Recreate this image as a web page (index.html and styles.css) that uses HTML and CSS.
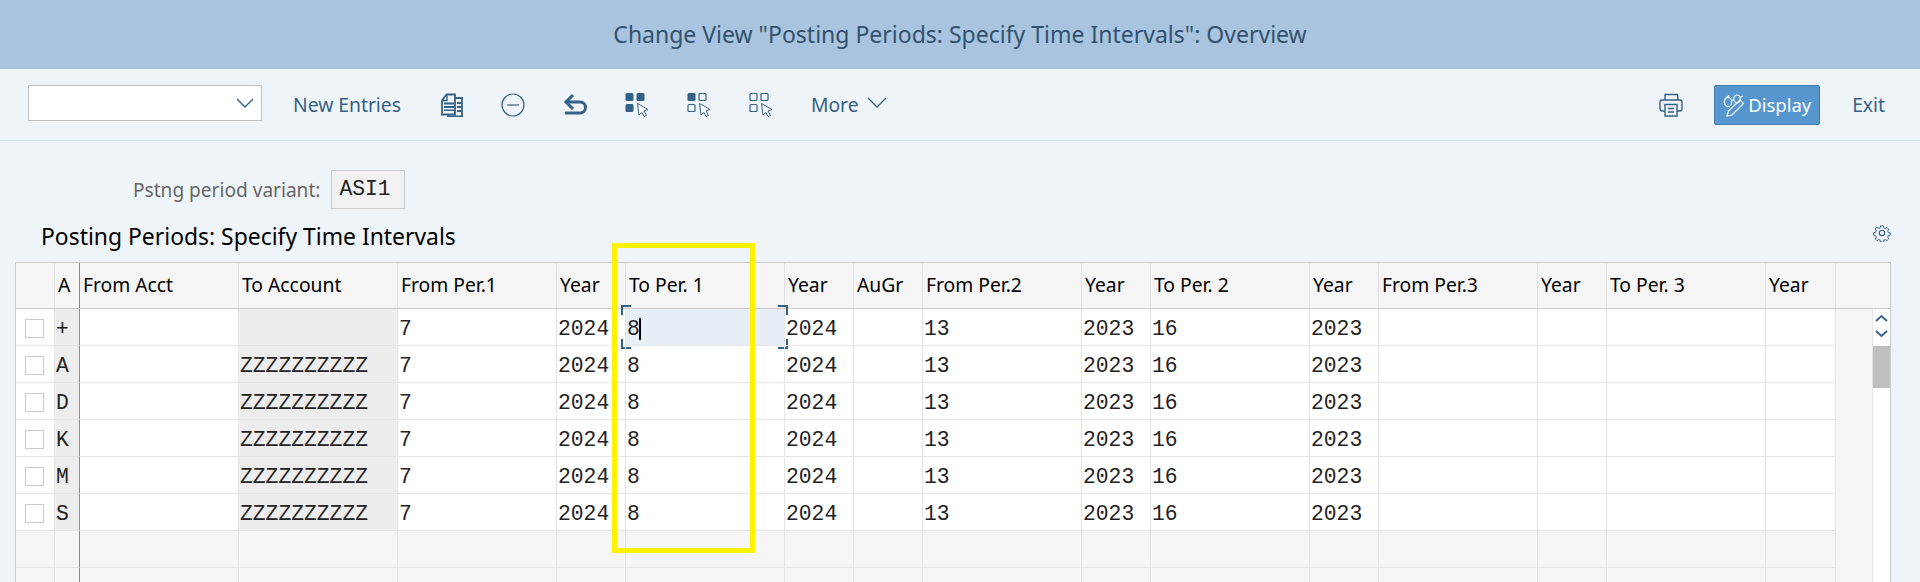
FILE: index.html
```html
<!DOCTYPE html>
<html lang="en">
<head>
<meta charset="utf-8">
<title>Change View</title>
<link rel="stylesheet" href="styles.css">
</head>
<body>
<header class="title-bar">Change View "Posting Periods: Specify Time Intervals": Overview</header>
<nav class="toolbar">
  <div class="select"><svg class="chev" width="18" height="10" viewBox="0 0 18 10"><path d="M1 1l8 8 8-8" fill="none" stroke="#346187" stroke-width="1.4"/></svg></div>
  <span class="tool-text first">New Entries</span>
  <svg class="icon" viewBox="0 0 24 24"><path d="M3 7.5L7.5 1.5H16V21.5H3Z" fill="none" stroke="#346187" stroke-width="1.8"/><path d="M3 7.5H8V2" fill="none" stroke="#346187" stroke-width="1.4"/><path d="M5 9.5h10v2H5zM5 13h10v2H5zM5 16.5h10v1.6H5z" fill="#346187"/><path d="M16.5 5H23V23.5H9V21.8" fill="none" stroke="#346187" stroke-width="1.8"/><path d="M18 9h4v2h-4zM18 13h4v2h-4zM18 17h4v2h-4z" fill="#346187"/></svg>
  <svg class="icon" viewBox="0 0 24 24"><circle cx="12" cy="12" r="11" fill="none" stroke="#346187" stroke-width="1.2"/><path d="M6 12h12" stroke="#346187" stroke-width="1.2"/></svg>
  <svg class="icon" viewBox="0 0 24 24"><path d="M10 2L3 9l7 7" fill="none" stroke="#346187" stroke-width="3"/><path d="M3.500 9H17a5.400 5.400 0 0 1 0 11H2" fill="none" stroke="#346187" stroke-width="3"/></svg>
  <svg class="icon" viewBox="0 0 24 24"><g fill="#346187"><rect x="0.5" y="0" width="8" height="8" rx="1.5"/><rect x="11.5" y="0" width="8" height="8" rx="1.5"/><rect x="0.5" y="11" width="8" height="8" rx="1.5"/></g><path class="cursor" d="M12.5 10.500L23 16.500 19 18 21.500 22.500 19 23.500 17 19.500 14 22Z"/></svg>
  <svg class="icon" viewBox="0 0 24 24"><rect x="0.5" y="0" width="8" height="8" rx="1.5" fill="#346187"/><g class="hollow"><rect x="12" y="0.500" width="7" height="7" rx="1"/><rect x="1" y="11.500" width="7" height="7" rx="1"/></g><path class="cursor" d="M12.5 10.500L23 16.500 19 18 21.500 22.500 19 23.500 17 19.500 14 22Z"/></svg>
  <svg class="icon" viewBox="0 0 24 24"><g class="hollow"><rect x="1" y="0.500" width="7" height="7" rx="1"/><rect x="12" y="0.500" width="7" height="7" rx="1"/><rect x="1" y="11.500" width="7" height="7" rx="1"/></g><path class="cursor" d="M12.5 10.500L23 16.500 19 18 21.500 22.500 19 23.500 17 19.500 14 22Z"/></svg>
  <span class="tool-text">More<svg class="more-chev" width="20" height="11" viewBox="0 0 20 11"><path d="M1 1l9 9 9-9" fill="none" stroke="#346187" stroke-width="1.3"/></svg></span>
  <div class="tool-right">
    <svg class="icon" viewBox="0 0 24 24"><path d="M6 7V1.500H18.500L19 7" fill="none" stroke="#346187" stroke-width="1.400"/><path d="M6 18H3a2 2 0 0 1-2-2V9a2 2 0 0 1 2-2H21a2 2 0 0 1 2 2v7a2 2 0 0 1-2 2H18" fill="none" stroke="#346187" stroke-width="1.400"/><path d="M6 11.500H18V23H6Z" fill="#eff4f9" stroke="#346187" stroke-width="1.400"/><path d="M9 15.500h6M9 19h6" stroke="#346187" stroke-width="1.300"/></svg>
    <button class="display-btn"><svg width="24" height="24" viewBox="0 0 24 24"><g fill="none" stroke="#fff" stroke-width="1.200"><ellipse cx="5" cy="9" rx="3.600" ry="4.600"/><ellipse cx="14" cy="6" rx="3.200" ry="4"/><path d="M8.500 7.500L11 6.500"/><path d="M2 6L6 2.500M17 4.500L20 3"/><path d="M4 23l1.500-5L17 7l3.500 3.500L9 22Z"/></g></svg>Display</button>
    <span class="tool-text">Exit</span>
  </div>
</nav>
<main class="content">
  <div class="form-row"><label class="form-label">Pstng period variant:</label><span class="form-value">ASI1</span></div>
  <div class="section-head">
    <h1 class="section-title">Posting Periods: Specify Time Intervals</h1>
    <svg class="gear" width="18" height="18" viewBox="0 0 18 18"><g fill="none" stroke="#346187" stroke-width="1.100"><path d="M7.500 1h3l.5 2.300 1.500.7 2-1.200 2 2-1.200 2 .7 1.600 2.200.5v2.500l-2.200.6-.7 1.500 1.200 2-2 2-2-1.200-1.500.7-.5 2.200h-3l-.5-2.200-1.500-.7-2 1.200-2-2 1.200-2-.7-1.500-2.200-.6V8.600l2.200-.5.7-1.600-1.200-2 2-2 2 1.200L7 3.300Z" transform="translate(.9 .9) scale(.9)"/><circle cx="9" cy="9" r="2.700"/></g></svg>
  </div>
  <section class="table">
    <div class="cols head">
      <div class="c sel"></div><div class="c fix">A</div><div class="c">From Acct</div><div class="c">To Account</div><div class="c">From Per.1</div><div class="c">Year</div><div class="c">To Per. 1</div><div class="c">Year</div><div class="c">AuGr</div><div class="c">From Per.2</div><div class="c">Year</div><div class="c">To Per. 2</div><div class="c">Year</div><div class="c">From Per.3</div><div class="c">Year</div><div class="c">To Per. 3</div><div class="c">Year</div><div class="c filler"></div>
    </div>
    <div class="body">
      <div class="rows">
        <div class="cols row">
          <div class="c sel"><span class="check"></span></div><div class="c fix">+</div><div class="c"></div><div class="c ro"></div><div class="c">7</div><div class="c">2024</div><div class="c focus">8<span class="caret"></span><i class="corner tl"></i><i class="corner tr"></i><i class="corner bl"></i><i class="corner br"></i></div><div class="c">2024</div><div class="c"></div><div class="c">13</div><div class="c">2023</div><div class="c">16</div><div class="c">2023</div><div class="c"></div><div class="c"></div><div class="c"></div><div class="c"></div><div class="c filler"></div>
        </div>
        <div class="cols row">
          <div class="c sel"><span class="check"></span></div><div class="c fix">A</div><div class="c"></div><div class="c ro">ZZZZZZZZZZ</div><div class="c">7</div><div class="c">2024</div><div class="c">8</div><div class="c">2024</div><div class="c"></div><div class="c">13</div><div class="c">2023</div><div class="c">16</div><div class="c">2023</div><div class="c"></div><div class="c"></div><div class="c"></div><div class="c"></div><div class="c filler"></div>
        </div>
        <div class="cols row">
          <div class="c sel"><span class="check"></span></div><div class="c fix">D</div><div class="c"></div><div class="c ro">ZZZZZZZZZZ</div><div class="c">7</div><div class="c">2024</div><div class="c">8</div><div class="c">2024</div><div class="c"></div><div class="c">13</div><div class="c">2023</div><div class="c">16</div><div class="c">2023</div><div class="c"></div><div class="c"></div><div class="c"></div><div class="c"></div><div class="c filler"></div>
        </div>
        <div class="cols row">
          <div class="c sel"><span class="check"></span></div><div class="c fix">K</div><div class="c"></div><div class="c ro">ZZZZZZZZZZ</div><div class="c">7</div><div class="c">2024</div><div class="c">8</div><div class="c">2024</div><div class="c"></div><div class="c">13</div><div class="c">2023</div><div class="c">16</div><div class="c">2023</div><div class="c"></div><div class="c"></div><div class="c"></div><div class="c"></div><div class="c filler"></div>
        </div>
        <div class="cols row">
          <div class="c sel"><span class="check"></span></div><div class="c fix">M</div><div class="c"></div><div class="c ro">ZZZZZZZZZZ</div><div class="c">7</div><div class="c">2024</div><div class="c">8</div><div class="c">2024</div><div class="c"></div><div class="c">13</div><div class="c">2023</div><div class="c">16</div><div class="c">2023</div><div class="c"></div><div class="c"></div><div class="c"></div><div class="c"></div><div class="c filler"></div>
        </div>
        <div class="cols row">
          <div class="c sel"><span class="check"></span></div><div class="c fix">S</div><div class="c"></div><div class="c ro">ZZZZZZZZZZ</div><div class="c">7</div><div class="c">2024</div><div class="c">8</div><div class="c">2024</div><div class="c"></div><div class="c">13</div><div class="c">2023</div><div class="c">16</div><div class="c">2023</div><div class="c"></div><div class="c"></div><div class="c"></div><div class="c"></div><div class="c filler"></div>
        </div>
        <div class="cols row empty">
          <div class="c sel"></div><div class="c fix"></div><div class="c"></div><div class="c"></div><div class="c"></div><div class="c"></div><div class="c"></div><div class="c"></div><div class="c"></div><div class="c"></div><div class="c"></div><div class="c"></div><div class="c"></div><div class="c"></div><div class="c"></div><div class="c"></div><div class="c"></div><div class="c filler"></div>
        </div>
        <div class="cols row empty">
          <div class="c sel"></div><div class="c fix"></div><div class="c"></div><div class="c"></div><div class="c"></div><div class="c"></div><div class="c"></div><div class="c"></div><div class="c"></div><div class="c"></div><div class="c"></div><div class="c"></div><div class="c"></div><div class="c"></div><div class="c"></div><div class="c"></div><div class="c"></div><div class="c filler"></div>
        </div>
      </div>
      <aside class="scroll">
        <svg width="17" height="36" viewBox="0 0 17 36"><path d="M3 12l5.500-5 5.500 5M3 22l5.500 5 5.500-5" fill="none" stroke="#346187" stroke-width="1.800"/></svg>
        <div class="thumb"></div>
      </aside>
    </div>
  </section>
</main>
<div class="highlight"></div>
</body>
</html>
```
FILE: styles.css
```css
html, body { margin: 0; padding: 0; }
body {
  height: 582px;
  overflow: hidden;
  background: #eff4f9;
  font-family: "Noto Sans", "Open Sans", Arial, sans-serif;
  position: relative;
}
.title-bar {
  height: 69px;
  background: #a9c4de;
  color: #32526f;
  font-size: 23px;
  line-height: 68px;
  text-align: center;
}
.toolbar {
  box-sizing: border-box;
  border-bottom: 1px solid #d1e0ee;
  height: 72px;
  padding: 0 35px 0 28px;
  display: flex;
  align-items: center;
  gap: 38px;
  color: #346187;
}
.select {
  width: 234px;
  height: 36px;
  box-sizing: border-box;
  background: #fff;
  border: 1px solid #bfbfbf;
  display: flex;
  align-items: center;
  justify-content: flex-end;
  padding-right: 7px;
  margin: -3px -7px 0 0;
}
.tool-text { font-size: 19.300px; white-space: nowrap; display: flex; align-items: center; }
.more-chev { margin-left: 8px; margin-top: -4px; }
.icon { width: 24px; height: 24px; flex: none; }
.hollow rect { fill: none; stroke: #346187; stroke-width: 1.2; }
.cursor { fill: #fff; stroke: #346187; stroke-width: 1; }
.tool-right { margin-left: auto; display: flex; align-items: center; gap: 31px; }
.display-btn {
  width: 106px;
  height: 40px;
  box-sizing: border-box;
  background: #5496cd;
  border: 1px solid #427cac;
  border-radius: 2px;
  color: #fff;
  font: inherit;
  font-size: 18.500px;
  display: flex;
  align-items: center;
  gap: 1px;
  padding: 0 0 0 8px;
  margin-right: 1px;
}
.content { display: flex; flex-direction: column; }
.form-row {
  display: flex;
  align-items: center;
  padding: 29px 0 0 133px;
  gap: 11px;
}
.form-label { color: #666; font-size: 19.100px; }
.form-value {
  width: 74px;
  height: 39px;
  box-sizing: border-box;
  background: #f2f2f2;
  border: 1px solid #ccc;
  font: 21.330px/37px "Liberation Mono", monospace;
  padding-left: 7px;
  color: #222;
}
.section-head {
  display: flex;
  justify-content: space-between;
  align-items: center;
  height: 53px;
  padding: 2px 29px 0 41px;
  box-sizing: border-box;
}
.section-title { margin: 0; font-size: 22.900px; font-weight: 400; color: #000; }
.gear { margin-top: -8px; }
.table {
  margin-left: 15px;
  width: 1876px;
  box-sizing: border-box;
  border: 1px solid #ccc;
  border-bottom: 0;
  background: #f5f5f5;
}
.cols {
  display: grid;
  grid-template-columns: 39px 25px 159px 159px 159px 69px 159px 69px 69px 159px 69px 159px 69px 159px 69px 159px 70px 1fr;
}
.head {
  height: 46px;
  box-sizing: border-box;
  border-bottom: 1px solid #ccc;
  background: #f5f5f5;
  font-size: 19.300px;
  color: #000;
}
.head .c { padding: 0 0 2px 3px; display: flex; align-items: center; border-right: 1px solid #e0e0e0; white-space: nowrap; }
.head .c.fix { border-right: 1px solid #8c8c8c; padding-left: 3px; }
.head .c.sel { padding: 0; }
.head .c.filler { border-right: 0; }
.body { display: flex; }
.rows { width: 1857px; flex: none; }
.row { height: 37px; background: #fff; font: 21.330px/41px "Liberation Mono", monospace; color: #222; }
.row.empty { background: #f5f5f5; }
.row .c {
  box-sizing: border-box;
  height: 37px;
  border-right: 1px solid #e5e5e5;
  border-bottom: 1px solid #e5e5e5;
  padding-left: 1px;
  position: relative;
  white-space: nowrap;
}
.row .c.sel { padding: 2px 1px 0 0; display: flex; align-items: center; justify-content: center; }
.row .c.fix { background: #ededed; border-right: 1px solid #8c8c8c; padding-left: 1px; }
.row.empty .c.fix { background: #f5f5f5; }
.row .c.ro { background: #ededed; }
.row .c.focus { background: #e8eef6; }
.row .c.filler { background: #f5f5f5; border-bottom: 0; border-right: 1px solid #e5e5e5; }
.check { width: 19px; height: 19px; box-sizing: border-box; background: #fff; border: 1px solid #ccc; }
.caret { display: inline-block; width: 2px; height: 22px; background: #000; vertical-align: -5px; margin-left: -1px; }
.corner { position: absolute; width: 8px; height: 8px; border: 0 solid #346187; }
.tl { left: -5px; top: -4px; border-width: 2px 0 0 2px; }
.tr { right: -4px; top: -4px; border-width: 2px 2px 0 0; }
.bl { left: -5px; bottom: -4px; border-width: 0 0 2px 2px; }
.br { right: -4px; bottom: -4px; border-width: 0 2px 2px 0; }
.scroll { flex: 1; background: #fff; display: flex; flex-direction: column; }
.scroll svg { display: block; flex: none; }
.thumb { height: 42px; background: #bfbfbf; margin-top: 1px; }
.highlight {
  position: absolute;
  left: 612px;
  top: 243px;
  width: 143px;
  height: 310px;
  box-sizing: border-box;
  border: 5px solid #fff200;
  pointer-events: none;
}
```
